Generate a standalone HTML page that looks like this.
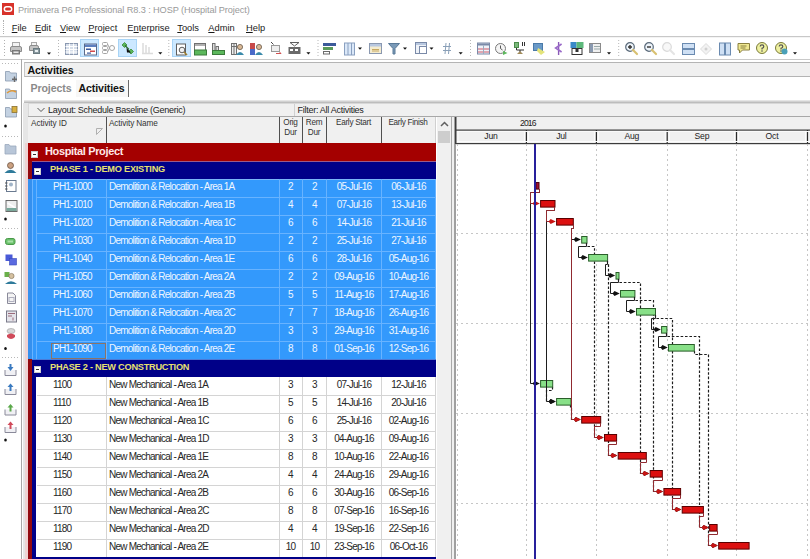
<!DOCTYPE html>
<html><head><meta charset="utf-8"><style>
html,body{margin:0;padding:0;width:810px;height:559px;overflow:hidden;background:#fff}
body{position:relative;font-family:"Liberation Sans", sans-serif}
.t{position:absolute;white-space:nowrap;line-height:1.15}
u{text-decoration:underline;text-underline-offset:1px}
</style></head><body>
<div style="position:absolute;left:0px;top:0px;width:810px;height:17px;background:#fff"></div><svg style="position:absolute;left:2px;top:3px" width="12" height="12" viewBox="0 0 13 13"><rect x="0" y="0" width="13" height="13" fill="#d8322a"/><rect x="2.5" y="4" width="8" height="5" rx="2.5" ry="2.5" fill="none" stroke="#fff" stroke-width="1.6"/></svg><div class="t" style="left:18px;top:4.5px;font-size:9.2px;color:#9a9a9a;font-weight:normal;letter-spacing:-0.1px;">Primavera P6 Professional R8.3 : HOSP (Hospital Project)</div><div style="position:absolute;left:0px;top:17px;width:810px;height:20px;background:#fff"></div><div style="position:absolute;left:3px;top:20px;width:1px;height:14px;border-left:1px dotted #b0b0b0"></div><div class="t" style="left:11.7px;top:23.3px;font-size:9.3px;color:#1a1a1a;font-weight:normal;letter-spacing:0px;"><u>F</u>ile</div><div class="t" style="left:35px;top:23.3px;font-size:9.3px;color:#1a1a1a;font-weight:normal;letter-spacing:0px;"><u>E</u>dit</div><div class="t" style="left:60px;top:23.3px;font-size:9.3px;color:#1a1a1a;font-weight:normal;letter-spacing:0px;"><u>V</u>iew</div><div class="t" style="left:88.3px;top:23.3px;font-size:9.3px;color:#1a1a1a;font-weight:normal;letter-spacing:0px;"><u>P</u>roject</div><div class="t" style="left:127.3px;top:23.3px;font-size:9.3px;color:#1a1a1a;font-weight:normal;letter-spacing:0px;">E<u>n</u>terprise</div><div class="t" style="left:177.3px;top:23.3px;font-size:9.3px;color:#1a1a1a;font-weight:normal;letter-spacing:0px;"><u>T</u>ools</div><div class="t" style="left:208.3px;top:23.3px;font-size:9.3px;color:#1a1a1a;font-weight:normal;letter-spacing:0px;"><u>A</u>dmin</div><div class="t" style="left:246px;top:23.3px;font-size:9.3px;color:#1a1a1a;font-weight:normal;letter-spacing:0px;"><u>H</u>elp</div><div style="position:absolute;left:0px;top:36px;width:810px;height:1px;background:#c8c8c8"></div><div style="position:absolute;left:0px;top:37px;width:810px;height:1px;background:#f4f4f4"></div><div style="position:absolute;left:0px;top:38px;width:810px;height:21px;background:#fff"></div><div style="position:absolute;left:0px;top:59px;width:810px;height:1px;background:#c9c9c9"></div><div style="position:absolute;left:0px;top:60px;width:810px;height:2px;background:#fff"></div><div style="position:absolute;left:0px;top:62px;width:21px;height:497px;background:#fff"></div><div style="position:absolute;left:21px;top:59px;width:1px;height:500px;background:#a8a8a8"></div><div style="position:absolute;left:22px;top:62px;width:2px;height:497px;background:#fff"></div><div style="position:absolute;left:24px;top:62px;width:786px;height:15px;background:#f0f0f0;border-top:1px solid #b4b4b4;border-left:1px solid #c8c8c8;border-bottom:1px solid #b4b4b4;box-sizing:border-box"></div><div class="t" style="left:27.5px;top:64px;font-size:10.6px;color:#111;font-weight:bold;letter-spacing:-0.1px;">Activities</div><div style="position:absolute;left:24px;top:77px;width:786px;height:23px;background:#fff"></div><div style="position:absolute;left:76px;top:80px;width:52px;height:17px;background:#f7f7f7"></div><div style="position:absolute;left:128px;top:80px;width:1px;height:17px;background:#6a6a6a"></div><div class="t" style="left:30.5px;top:82px;font-size:10.6px;color:#8a8a8a;font-weight:bold;letter-spacing:-0.1px;">Projects</div><div class="t" style="left:78.5px;top:82px;font-size:10.6px;color:#111;font-weight:bold;letter-spacing:-0.1px;">Activities</div><div style="position:absolute;left:24px;top:100px;width:786px;height:1px;background:#e6e6e6"></div><div style="position:absolute;left:24px;top:101px;width:786px;height:1px;background:#d2d2d2"></div><div style="position:absolute;left:24px;top:102px;width:786px;height:1px;background:#bdbdbd"></div><div style="position:absolute;left:28px;top:103px;width:782px;height:13px;background:#f0f0f0;border-top:1px solid #d8d8d8;border-left:1px solid #d8d8d8;box-sizing:border-box"></div><div style="position:absolute;left:28px;top:116px;width:782px;height:1px;background:#a8a8a8"></div><div style="position:absolute;left:294px;top:104px;width:1px;height:12px;background:#d0d0d0"></div><svg style="position:absolute;left:37px;top:107px" width="8" height="6" viewBox="0 0 8 6"><path d="M0.5 1 L4 4.5 L7.5 1" fill="none" stroke="#555" stroke-width="1"/></svg><div class="t" style="left:48px;top:104.5px;font-size:9px;color:#222;font-weight:normal;letter-spacing:-0.27px;">Layout: Schedule Baseline (Generic)</div><div class="t" style="left:297.5px;top:104.5px;font-size:9px;color:#222;font-weight:normal;letter-spacing:-0.27px;">Filter: All Activities</div><div style="position:absolute;left:28px;top:117px;width:408px;height:26px;background:#f0f0f0"></div><div style="position:absolute;left:106px;top:117px;width:1px;height:26px;background:#505050"></div><div style="position:absolute;left:279px;top:117px;width:1px;height:26px;background:#505050"></div><div style="position:absolute;left:302px;top:117px;width:1px;height:26px;background:#505050"></div><div style="position:absolute;left:326px;top:117px;width:1px;height:26px;background:#505050"></div><div style="position:absolute;left:381px;top:117px;width:1px;height:26px;background:#505050"></div><div style="position:absolute;left:435px;top:117px;width:1px;height:26px;background:#d0d0d0"></div><div class="t" style="left:31px;top:118.5px;font-size:8.2px;color:#333;font-weight:normal;letter-spacing:-0.05px;">Activity ID</div><div class="t" style="left:109px;top:118.5px;font-size:8.2px;color:#333;font-weight:normal;letter-spacing:-0.1px;">Activity Name</div><div class="t" style="left:275.5px;top:118px;width:30px;text-align:center;font-size:8.2px;color:#333;font-weight:normal;letter-spacing:-0.3px;">Orig</div><div class="t" style="left:275.5px;top:128px;width:30px;text-align:center;font-size:8.2px;color:#333;font-weight:normal;letter-spacing:-0.3px;">Dur</div><div class="t" style="left:299.0px;top:118px;width:30px;text-align:center;font-size:8.2px;color:#333;font-weight:normal;letter-spacing:-0.3px;">Rem</div><div class="t" style="left:299.0px;top:128px;width:30px;text-align:center;font-size:8.2px;color:#333;font-weight:normal;letter-spacing:-0.3px;">Dur</div><div class="t" style="left:323.5px;top:118px;width:60px;text-align:center;font-size:8.2px;color:#333;font-weight:normal;letter-spacing:-0.3px;">Early Start</div><div class="t" style="left:378.0px;top:118px;width:60px;text-align:center;font-size:8.2px;color:#333;font-weight:normal;letter-spacing:-0.3px;">Early Finish</div><svg style="position:absolute;left:96px;top:128px" width="7" height="7" viewBox="0 0 7 7"><path d="M0.5 0.5 L6.5 0.5 L0.5 6.5 Z" fill="none" stroke="#b0b0b0" stroke-width="1"/></svg><div style="position:absolute;left:28px;top:143px;width:408px;height:416px;background:#fff"></div><div style="position:absolute;left:28px;top:143px;width:408px;height:18px;background:#a40000"></div><div style="position:absolute;left:28px;top:161px;width:4px;height:398px;background:#920a10"></div><div style="position:absolute;left:23px;top:103px;width:5px;height:456px;background:#e6e6e6"></div><div style="position:absolute;left:25px;top:143px;width:3px;height:416px;background:#eed2d2"></div><div style="position:absolute;left:31px;top:151px;width:7px;height:7px;background:#fff;box-sizing:border-box;border:1px solid #ccc"></div><div style="position:absolute;left:33px;top:154px;width:3px;height:1px;background:#333"></div><div class="t" style="left:45px;top:145px;font-size:11px;color:#ffe8e8;font-weight:bold;letter-spacing:-0.36px;">Hospital Project</div><div style="position:absolute;left:32px;top:161px;width:404px;height:18px;background:#000088"></div><div style="position:absolute;left:32px;top:161px;width:404px;height:1px;background:#9a5a8a"></div><div style="position:absolute;left:34px;top:168px;width:7px;height:7px;background:#fff;box-sizing:border-box;border:1px solid #ccc"></div><div style="position:absolute;left:36px;top:171px;width:3px;height:1px;background:#333"></div><div class="t" style="left:50px;top:163.8px;font-size:9.2px;color:#e6e070;font-weight:bold;letter-spacing:-0.24px;">PHASE 1 - DEMO EXISTING</div><div style="position:absolute;left:28px;top:179px;width:408px;height:180px;background:#3399fc"></div><div style="position:absolute;left:32px;top:179px;width:1px;height:180px;background:#68b3ff"></div><div style="position:absolute;left:36px;top:179px;width:1px;height:180px;background:#68b3ff"></div><div style="position:absolute;left:28px;top:179px;width:4px;height:180px;background:#3590ee"></div><div style="position:absolute;left:32px;top:179px;width:404px;height:1px;background:#7ab8f8"></div><div style="position:absolute;left:37px;top:197px;width:399px;height:1px;background:#68b3ff"></div><div style="position:absolute;left:106px;top:179px;width:1px;height:18px;background:#68b3ff"></div><div style="position:absolute;left:279px;top:179px;width:1px;height:18px;background:#68b3ff"></div><div style="position:absolute;left:302px;top:179px;width:1px;height:18px;background:#68b3ff"></div><div style="position:absolute;left:326px;top:179px;width:1px;height:18px;background:#68b3ff"></div><div style="position:absolute;left:381px;top:179px;width:1px;height:18px;background:#68b3ff"></div><div style="position:absolute;left:435px;top:179px;width:1px;height:18px;background:#68b3ff"></div><div class="t" style="left:53px;top:181.1px;font-size:10px;color:#eef6ff;font-weight:normal;letter-spacing:-0.78px;">PH1-1000</div><div class="t" style="left:109px;top:181.1px;font-size:10px;color:#eef6ff;font-weight:normal;letter-spacing:-0.78px;">Demolition &amp; Relocation - Area 1A</div><div class="t" style="left:279.5px;top:181.1px;width:22px;text-align:center;font-size:10px;color:#eef6ff;font-weight:normal;letter-spacing:-0.78px;">2</div><div class="t" style="left:303.5px;top:181.1px;width:22px;text-align:center;font-size:10px;color:#eef6ff;font-weight:normal;letter-spacing:-0.78px;">2</div><div class="t" style="left:327.0px;top:181.1px;width:54px;text-align:center;font-size:10px;color:#eef6ff;font-weight:normal;letter-spacing:-0.78px;">05-Jul-16</div><div class="t" style="left:381.5px;top:181.1px;width:54px;text-align:center;font-size:10px;color:#eef6ff;font-weight:normal;letter-spacing:-0.78px;">06-Jul-16</div><div style="position:absolute;left:37px;top:215px;width:399px;height:1px;background:#68b3ff"></div><div style="position:absolute;left:106px;top:197px;width:1px;height:18px;background:#68b3ff"></div><div style="position:absolute;left:279px;top:197px;width:1px;height:18px;background:#68b3ff"></div><div style="position:absolute;left:302px;top:197px;width:1px;height:18px;background:#68b3ff"></div><div style="position:absolute;left:326px;top:197px;width:1px;height:18px;background:#68b3ff"></div><div style="position:absolute;left:381px;top:197px;width:1px;height:18px;background:#68b3ff"></div><div style="position:absolute;left:435px;top:197px;width:1px;height:18px;background:#68b3ff"></div><div class="t" style="left:53px;top:199.1px;font-size:10px;color:#eef6ff;font-weight:normal;letter-spacing:-0.78px;">PH1-1010</div><div class="t" style="left:109px;top:199.1px;font-size:10px;color:#eef6ff;font-weight:normal;letter-spacing:-0.78px;">Demolition &amp; Relocation - Area 1B</div><div class="t" style="left:279.5px;top:199.1px;width:22px;text-align:center;font-size:10px;color:#eef6ff;font-weight:normal;letter-spacing:-0.78px;">4</div><div class="t" style="left:303.5px;top:199.1px;width:22px;text-align:center;font-size:10px;color:#eef6ff;font-weight:normal;letter-spacing:-0.78px;">4</div><div class="t" style="left:327.0px;top:199.1px;width:54px;text-align:center;font-size:10px;color:#eef6ff;font-weight:normal;letter-spacing:-0.78px;">07-Jul-16</div><div class="t" style="left:381.5px;top:199.1px;width:54px;text-align:center;font-size:10px;color:#eef6ff;font-weight:normal;letter-spacing:-0.78px;">13-Jul-16</div><div style="position:absolute;left:37px;top:233px;width:399px;height:1px;background:#68b3ff"></div><div style="position:absolute;left:106px;top:215px;width:1px;height:18px;background:#68b3ff"></div><div style="position:absolute;left:279px;top:215px;width:1px;height:18px;background:#68b3ff"></div><div style="position:absolute;left:302px;top:215px;width:1px;height:18px;background:#68b3ff"></div><div style="position:absolute;left:326px;top:215px;width:1px;height:18px;background:#68b3ff"></div><div style="position:absolute;left:381px;top:215px;width:1px;height:18px;background:#68b3ff"></div><div style="position:absolute;left:435px;top:215px;width:1px;height:18px;background:#68b3ff"></div><div class="t" style="left:53px;top:217.1px;font-size:10px;color:#eef6ff;font-weight:normal;letter-spacing:-0.78px;">PH1-1020</div><div class="t" style="left:109px;top:217.1px;font-size:10px;color:#eef6ff;font-weight:normal;letter-spacing:-0.78px;">Demolition &amp; Relocation - Area 1C</div><div class="t" style="left:279.5px;top:217.1px;width:22px;text-align:center;font-size:10px;color:#eef6ff;font-weight:normal;letter-spacing:-0.78px;">6</div><div class="t" style="left:303.5px;top:217.1px;width:22px;text-align:center;font-size:10px;color:#eef6ff;font-weight:normal;letter-spacing:-0.78px;">6</div><div class="t" style="left:327.0px;top:217.1px;width:54px;text-align:center;font-size:10px;color:#eef6ff;font-weight:normal;letter-spacing:-0.78px;">14-Jul-16</div><div class="t" style="left:381.5px;top:217.1px;width:54px;text-align:center;font-size:10px;color:#eef6ff;font-weight:normal;letter-spacing:-0.78px;">21-Jul-16</div><div style="position:absolute;left:37px;top:251px;width:399px;height:1px;background:#68b3ff"></div><div style="position:absolute;left:106px;top:233px;width:1px;height:18px;background:#68b3ff"></div><div style="position:absolute;left:279px;top:233px;width:1px;height:18px;background:#68b3ff"></div><div style="position:absolute;left:302px;top:233px;width:1px;height:18px;background:#68b3ff"></div><div style="position:absolute;left:326px;top:233px;width:1px;height:18px;background:#68b3ff"></div><div style="position:absolute;left:381px;top:233px;width:1px;height:18px;background:#68b3ff"></div><div style="position:absolute;left:435px;top:233px;width:1px;height:18px;background:#68b3ff"></div><div class="t" style="left:53px;top:235.1px;font-size:10px;color:#eef6ff;font-weight:normal;letter-spacing:-0.78px;">PH1-1030</div><div class="t" style="left:109px;top:235.1px;font-size:10px;color:#eef6ff;font-weight:normal;letter-spacing:-0.78px;">Demolition &amp; Relocation - Area 1D</div><div class="t" style="left:279.5px;top:235.1px;width:22px;text-align:center;font-size:10px;color:#eef6ff;font-weight:normal;letter-spacing:-0.78px;">2</div><div class="t" style="left:303.5px;top:235.1px;width:22px;text-align:center;font-size:10px;color:#eef6ff;font-weight:normal;letter-spacing:-0.78px;">2</div><div class="t" style="left:327.0px;top:235.1px;width:54px;text-align:center;font-size:10px;color:#eef6ff;font-weight:normal;letter-spacing:-0.78px;">25-Jul-16</div><div class="t" style="left:381.5px;top:235.1px;width:54px;text-align:center;font-size:10px;color:#eef6ff;font-weight:normal;letter-spacing:-0.78px;">27-Jul-16</div><div style="position:absolute;left:37px;top:269px;width:399px;height:1px;background:#68b3ff"></div><div style="position:absolute;left:106px;top:251px;width:1px;height:18px;background:#68b3ff"></div><div style="position:absolute;left:279px;top:251px;width:1px;height:18px;background:#68b3ff"></div><div style="position:absolute;left:302px;top:251px;width:1px;height:18px;background:#68b3ff"></div><div style="position:absolute;left:326px;top:251px;width:1px;height:18px;background:#68b3ff"></div><div style="position:absolute;left:381px;top:251px;width:1px;height:18px;background:#68b3ff"></div><div style="position:absolute;left:435px;top:251px;width:1px;height:18px;background:#68b3ff"></div><div class="t" style="left:53px;top:253.1px;font-size:10px;color:#eef6ff;font-weight:normal;letter-spacing:-0.78px;">PH1-1040</div><div class="t" style="left:109px;top:253.1px;font-size:10px;color:#eef6ff;font-weight:normal;letter-spacing:-0.78px;">Demolition &amp; Relocation - Area 1E</div><div class="t" style="left:279.5px;top:253.1px;width:22px;text-align:center;font-size:10px;color:#eef6ff;font-weight:normal;letter-spacing:-0.78px;">6</div><div class="t" style="left:303.5px;top:253.1px;width:22px;text-align:center;font-size:10px;color:#eef6ff;font-weight:normal;letter-spacing:-0.78px;">6</div><div class="t" style="left:327.0px;top:253.1px;width:54px;text-align:center;font-size:10px;color:#eef6ff;font-weight:normal;letter-spacing:-0.78px;">28-Jul-16</div><div class="t" style="left:381.5px;top:253.1px;width:54px;text-align:center;font-size:10px;color:#eef6ff;font-weight:normal;letter-spacing:-0.78px;">05-Aug-16</div><div style="position:absolute;left:37px;top:287px;width:399px;height:1px;background:#68b3ff"></div><div style="position:absolute;left:106px;top:269px;width:1px;height:18px;background:#68b3ff"></div><div style="position:absolute;left:279px;top:269px;width:1px;height:18px;background:#68b3ff"></div><div style="position:absolute;left:302px;top:269px;width:1px;height:18px;background:#68b3ff"></div><div style="position:absolute;left:326px;top:269px;width:1px;height:18px;background:#68b3ff"></div><div style="position:absolute;left:381px;top:269px;width:1px;height:18px;background:#68b3ff"></div><div style="position:absolute;left:435px;top:269px;width:1px;height:18px;background:#68b3ff"></div><div class="t" style="left:53px;top:271.1px;font-size:10px;color:#eef6ff;font-weight:normal;letter-spacing:-0.78px;">PH1-1050</div><div class="t" style="left:109px;top:271.1px;font-size:10px;color:#eef6ff;font-weight:normal;letter-spacing:-0.78px;">Demolition &amp; Relocation - Area 2A</div><div class="t" style="left:279.5px;top:271.1px;width:22px;text-align:center;font-size:10px;color:#eef6ff;font-weight:normal;letter-spacing:-0.78px;">2</div><div class="t" style="left:303.5px;top:271.1px;width:22px;text-align:center;font-size:10px;color:#eef6ff;font-weight:normal;letter-spacing:-0.78px;">2</div><div class="t" style="left:327.0px;top:271.1px;width:54px;text-align:center;font-size:10px;color:#eef6ff;font-weight:normal;letter-spacing:-0.78px;">09-Aug-16</div><div class="t" style="left:381.5px;top:271.1px;width:54px;text-align:center;font-size:10px;color:#eef6ff;font-weight:normal;letter-spacing:-0.78px;">10-Aug-16</div><div style="position:absolute;left:37px;top:305px;width:399px;height:1px;background:#68b3ff"></div><div style="position:absolute;left:106px;top:287px;width:1px;height:18px;background:#68b3ff"></div><div style="position:absolute;left:279px;top:287px;width:1px;height:18px;background:#68b3ff"></div><div style="position:absolute;left:302px;top:287px;width:1px;height:18px;background:#68b3ff"></div><div style="position:absolute;left:326px;top:287px;width:1px;height:18px;background:#68b3ff"></div><div style="position:absolute;left:381px;top:287px;width:1px;height:18px;background:#68b3ff"></div><div style="position:absolute;left:435px;top:287px;width:1px;height:18px;background:#68b3ff"></div><div class="t" style="left:53px;top:289.1px;font-size:10px;color:#eef6ff;font-weight:normal;letter-spacing:-0.78px;">PH1-1060</div><div class="t" style="left:109px;top:289.1px;font-size:10px;color:#eef6ff;font-weight:normal;letter-spacing:-0.78px;">Demolition &amp; Relocation - Area 2B</div><div class="t" style="left:279.5px;top:289.1px;width:22px;text-align:center;font-size:10px;color:#eef6ff;font-weight:normal;letter-spacing:-0.78px;">5</div><div class="t" style="left:303.5px;top:289.1px;width:22px;text-align:center;font-size:10px;color:#eef6ff;font-weight:normal;letter-spacing:-0.78px;">5</div><div class="t" style="left:327.0px;top:289.1px;width:54px;text-align:center;font-size:10px;color:#eef6ff;font-weight:normal;letter-spacing:-0.78px;">11-Aug-16</div><div class="t" style="left:381.5px;top:289.1px;width:54px;text-align:center;font-size:10px;color:#eef6ff;font-weight:normal;letter-spacing:-0.78px;">17-Aug-16</div><div style="position:absolute;left:37px;top:323px;width:399px;height:1px;background:#68b3ff"></div><div style="position:absolute;left:106px;top:305px;width:1px;height:18px;background:#68b3ff"></div><div style="position:absolute;left:279px;top:305px;width:1px;height:18px;background:#68b3ff"></div><div style="position:absolute;left:302px;top:305px;width:1px;height:18px;background:#68b3ff"></div><div style="position:absolute;left:326px;top:305px;width:1px;height:18px;background:#68b3ff"></div><div style="position:absolute;left:381px;top:305px;width:1px;height:18px;background:#68b3ff"></div><div style="position:absolute;left:435px;top:305px;width:1px;height:18px;background:#68b3ff"></div><div class="t" style="left:53px;top:307.1px;font-size:10px;color:#eef6ff;font-weight:normal;letter-spacing:-0.78px;">PH1-1070</div><div class="t" style="left:109px;top:307.1px;font-size:10px;color:#eef6ff;font-weight:normal;letter-spacing:-0.78px;">Demolition &amp; Relocation - Area 2C</div><div class="t" style="left:279.5px;top:307.1px;width:22px;text-align:center;font-size:10px;color:#eef6ff;font-weight:normal;letter-spacing:-0.78px;">7</div><div class="t" style="left:303.5px;top:307.1px;width:22px;text-align:center;font-size:10px;color:#eef6ff;font-weight:normal;letter-spacing:-0.78px;">7</div><div class="t" style="left:327.0px;top:307.1px;width:54px;text-align:center;font-size:10px;color:#eef6ff;font-weight:normal;letter-spacing:-0.78px;">18-Aug-16</div><div class="t" style="left:381.5px;top:307.1px;width:54px;text-align:center;font-size:10px;color:#eef6ff;font-weight:normal;letter-spacing:-0.78px;">26-Aug-16</div><div style="position:absolute;left:37px;top:341px;width:399px;height:1px;background:#68b3ff"></div><div style="position:absolute;left:106px;top:323px;width:1px;height:18px;background:#68b3ff"></div><div style="position:absolute;left:279px;top:323px;width:1px;height:18px;background:#68b3ff"></div><div style="position:absolute;left:302px;top:323px;width:1px;height:18px;background:#68b3ff"></div><div style="position:absolute;left:326px;top:323px;width:1px;height:18px;background:#68b3ff"></div><div style="position:absolute;left:381px;top:323px;width:1px;height:18px;background:#68b3ff"></div><div style="position:absolute;left:435px;top:323px;width:1px;height:18px;background:#68b3ff"></div><div class="t" style="left:53px;top:325.1px;font-size:10px;color:#eef6ff;font-weight:normal;letter-spacing:-0.78px;">PH1-1080</div><div class="t" style="left:109px;top:325.1px;font-size:10px;color:#eef6ff;font-weight:normal;letter-spacing:-0.78px;">Demolition &amp; Relocation - Area 2D</div><div class="t" style="left:279.5px;top:325.1px;width:22px;text-align:center;font-size:10px;color:#eef6ff;font-weight:normal;letter-spacing:-0.78px;">3</div><div class="t" style="left:303.5px;top:325.1px;width:22px;text-align:center;font-size:10px;color:#eef6ff;font-weight:normal;letter-spacing:-0.78px;">3</div><div class="t" style="left:327.0px;top:325.1px;width:54px;text-align:center;font-size:10px;color:#eef6ff;font-weight:normal;letter-spacing:-0.78px;">29-Aug-16</div><div class="t" style="left:381.5px;top:325.1px;width:54px;text-align:center;font-size:10px;color:#eef6ff;font-weight:normal;letter-spacing:-0.78px;">31-Aug-16</div><div style="position:absolute;left:37px;top:359px;width:399px;height:1px;background:#68b3ff"></div><div style="position:absolute;left:106px;top:341px;width:1px;height:18px;background:#68b3ff"></div><div style="position:absolute;left:279px;top:341px;width:1px;height:18px;background:#68b3ff"></div><div style="position:absolute;left:302px;top:341px;width:1px;height:18px;background:#68b3ff"></div><div style="position:absolute;left:326px;top:341px;width:1px;height:18px;background:#68b3ff"></div><div style="position:absolute;left:381px;top:341px;width:1px;height:18px;background:#68b3ff"></div><div style="position:absolute;left:435px;top:341px;width:1px;height:18px;background:#68b3ff"></div><div class="t" style="left:53px;top:343.1px;font-size:10px;color:#eef6ff;font-weight:normal;letter-spacing:-0.78px;">PH1-1090</div><div class="t" style="left:109px;top:343.1px;font-size:10px;color:#eef6ff;font-weight:normal;letter-spacing:-0.78px;">Demolition &amp; Relocation - Area 2E</div><div class="t" style="left:279.5px;top:343.1px;width:22px;text-align:center;font-size:10px;color:#eef6ff;font-weight:normal;letter-spacing:-0.78px;">8</div><div class="t" style="left:303.5px;top:343.1px;width:22px;text-align:center;font-size:10px;color:#eef6ff;font-weight:normal;letter-spacing:-0.78px;">8</div><div class="t" style="left:327.0px;top:343.1px;width:54px;text-align:center;font-size:10px;color:#eef6ff;font-weight:normal;letter-spacing:-0.78px;">01-Sep-16</div><div class="t" style="left:381.5px;top:343.1px;width:54px;text-align:center;font-size:10px;color:#eef6ff;font-weight:normal;letter-spacing:-0.78px;">12-Sep-16</div><div style="position:absolute;left:50.5px;top:342.5px;width:55.5px;height:16.5px;border:1.5px solid #8a7468;box-sizing:border-box"></div><div style="position:absolute;left:32px;top:359px;width:404px;height:18px;background:#000088"></div><div style="position:absolute;left:32px;top:359px;width:404px;height:1px;background:#4a7ad8"></div><div style="position:absolute;left:34px;top:366px;width:7px;height:7px;background:#fff;box-sizing:border-box;border:1px solid #ccc"></div><div style="position:absolute;left:36px;top:369px;width:3px;height:1px;background:#333"></div><div class="t" style="left:50px;top:361.8px;font-size:9.2px;color:#e6e070;font-weight:bold;letter-spacing:-0.24px;">PHASE 2 - NEW CONSTRUCTION</div><div style="position:absolute;left:32px;top:377px;width:4px;height:182px;background:#000088"></div><div style="position:absolute;left:37px;top:395px;width:399px;height:1px;background:#d4d4d4"></div><div style="position:absolute;left:106px;top:377px;width:1px;height:18px;background:#d4d4d4"></div><div style="position:absolute;left:279px;top:377px;width:1px;height:18px;background:#d4d4d4"></div><div style="position:absolute;left:302px;top:377px;width:1px;height:18px;background:#d4d4d4"></div><div style="position:absolute;left:326px;top:377px;width:1px;height:18px;background:#d4d4d4"></div><div style="position:absolute;left:381px;top:377px;width:1px;height:18px;background:#d4d4d4"></div><div style="position:absolute;left:435px;top:377px;width:1px;height:18px;background:#d4d4d4"></div><div class="t" style="left:53px;top:379.1px;font-size:10px;color:#262626;font-weight:normal;letter-spacing:-0.78px;">1100</div><div class="t" style="left:109px;top:379.1px;font-size:10px;color:#262626;font-weight:normal;letter-spacing:-0.78px;">New Mechanical - Area 1A</div><div class="t" style="left:279.5px;top:379.1px;width:22px;text-align:center;font-size:10px;color:#262626;font-weight:normal;letter-spacing:-0.78px;">3</div><div class="t" style="left:303.5px;top:379.1px;width:22px;text-align:center;font-size:10px;color:#262626;font-weight:normal;letter-spacing:-0.78px;">3</div><div class="t" style="left:327.0px;top:379.1px;width:54px;text-align:center;font-size:10px;color:#262626;font-weight:normal;letter-spacing:-0.78px;">07-Jul-16</div><div class="t" style="left:381.5px;top:379.1px;width:54px;text-align:center;font-size:10px;color:#262626;font-weight:normal;letter-spacing:-0.78px;">12-Jul-16</div><div style="position:absolute;left:37px;top:413px;width:399px;height:1px;background:#d4d4d4"></div><div style="position:absolute;left:106px;top:395px;width:1px;height:18px;background:#d4d4d4"></div><div style="position:absolute;left:279px;top:395px;width:1px;height:18px;background:#d4d4d4"></div><div style="position:absolute;left:302px;top:395px;width:1px;height:18px;background:#d4d4d4"></div><div style="position:absolute;left:326px;top:395px;width:1px;height:18px;background:#d4d4d4"></div><div style="position:absolute;left:381px;top:395px;width:1px;height:18px;background:#d4d4d4"></div><div style="position:absolute;left:435px;top:395px;width:1px;height:18px;background:#d4d4d4"></div><div class="t" style="left:53px;top:397.1px;font-size:10px;color:#262626;font-weight:normal;letter-spacing:-0.78px;">1110</div><div class="t" style="left:109px;top:397.1px;font-size:10px;color:#262626;font-weight:normal;letter-spacing:-0.78px;">New Mechanical - Area 1B</div><div class="t" style="left:279.5px;top:397.1px;width:22px;text-align:center;font-size:10px;color:#262626;font-weight:normal;letter-spacing:-0.78px;">5</div><div class="t" style="left:303.5px;top:397.1px;width:22px;text-align:center;font-size:10px;color:#262626;font-weight:normal;letter-spacing:-0.78px;">5</div><div class="t" style="left:327.0px;top:397.1px;width:54px;text-align:center;font-size:10px;color:#262626;font-weight:normal;letter-spacing:-0.78px;">14-Jul-16</div><div class="t" style="left:381.5px;top:397.1px;width:54px;text-align:center;font-size:10px;color:#262626;font-weight:normal;letter-spacing:-0.78px;">20-Jul-16</div><div style="position:absolute;left:37px;top:431px;width:399px;height:1px;background:#d4d4d4"></div><div style="position:absolute;left:106px;top:413px;width:1px;height:18px;background:#d4d4d4"></div><div style="position:absolute;left:279px;top:413px;width:1px;height:18px;background:#d4d4d4"></div><div style="position:absolute;left:302px;top:413px;width:1px;height:18px;background:#d4d4d4"></div><div style="position:absolute;left:326px;top:413px;width:1px;height:18px;background:#d4d4d4"></div><div style="position:absolute;left:381px;top:413px;width:1px;height:18px;background:#d4d4d4"></div><div style="position:absolute;left:435px;top:413px;width:1px;height:18px;background:#d4d4d4"></div><div class="t" style="left:53px;top:415.1px;font-size:10px;color:#262626;font-weight:normal;letter-spacing:-0.78px;">1120</div><div class="t" style="left:109px;top:415.1px;font-size:10px;color:#262626;font-weight:normal;letter-spacing:-0.78px;">New Mechanical - Area 1C</div><div class="t" style="left:279.5px;top:415.1px;width:22px;text-align:center;font-size:10px;color:#262626;font-weight:normal;letter-spacing:-0.78px;">6</div><div class="t" style="left:303.5px;top:415.1px;width:22px;text-align:center;font-size:10px;color:#262626;font-weight:normal;letter-spacing:-0.78px;">6</div><div class="t" style="left:327.0px;top:415.1px;width:54px;text-align:center;font-size:10px;color:#262626;font-weight:normal;letter-spacing:-0.78px;">25-Jul-16</div><div class="t" style="left:381.5px;top:415.1px;width:54px;text-align:center;font-size:10px;color:#262626;font-weight:normal;letter-spacing:-0.78px;">02-Aug-16</div><div style="position:absolute;left:37px;top:449px;width:399px;height:1px;background:#d4d4d4"></div><div style="position:absolute;left:106px;top:431px;width:1px;height:18px;background:#d4d4d4"></div><div style="position:absolute;left:279px;top:431px;width:1px;height:18px;background:#d4d4d4"></div><div style="position:absolute;left:302px;top:431px;width:1px;height:18px;background:#d4d4d4"></div><div style="position:absolute;left:326px;top:431px;width:1px;height:18px;background:#d4d4d4"></div><div style="position:absolute;left:381px;top:431px;width:1px;height:18px;background:#d4d4d4"></div><div style="position:absolute;left:435px;top:431px;width:1px;height:18px;background:#d4d4d4"></div><div class="t" style="left:53px;top:433.1px;font-size:10px;color:#262626;font-weight:normal;letter-spacing:-0.78px;">1130</div><div class="t" style="left:109px;top:433.1px;font-size:10px;color:#262626;font-weight:normal;letter-spacing:-0.78px;">New Mechanical - Area 1D</div><div class="t" style="left:279.5px;top:433.1px;width:22px;text-align:center;font-size:10px;color:#262626;font-weight:normal;letter-spacing:-0.78px;">3</div><div class="t" style="left:303.5px;top:433.1px;width:22px;text-align:center;font-size:10px;color:#262626;font-weight:normal;letter-spacing:-0.78px;">3</div><div class="t" style="left:327.0px;top:433.1px;width:54px;text-align:center;font-size:10px;color:#262626;font-weight:normal;letter-spacing:-0.78px;">04-Aug-16</div><div class="t" style="left:381.5px;top:433.1px;width:54px;text-align:center;font-size:10px;color:#262626;font-weight:normal;letter-spacing:-0.78px;">09-Aug-16</div><div style="position:absolute;left:37px;top:467px;width:399px;height:1px;background:#d4d4d4"></div><div style="position:absolute;left:106px;top:449px;width:1px;height:18px;background:#d4d4d4"></div><div style="position:absolute;left:279px;top:449px;width:1px;height:18px;background:#d4d4d4"></div><div style="position:absolute;left:302px;top:449px;width:1px;height:18px;background:#d4d4d4"></div><div style="position:absolute;left:326px;top:449px;width:1px;height:18px;background:#d4d4d4"></div><div style="position:absolute;left:381px;top:449px;width:1px;height:18px;background:#d4d4d4"></div><div style="position:absolute;left:435px;top:449px;width:1px;height:18px;background:#d4d4d4"></div><div class="t" style="left:53px;top:451.1px;font-size:10px;color:#262626;font-weight:normal;letter-spacing:-0.78px;">1140</div><div class="t" style="left:109px;top:451.1px;font-size:10px;color:#262626;font-weight:normal;letter-spacing:-0.78px;">New Mechanical - Area 1E</div><div class="t" style="left:279.5px;top:451.1px;width:22px;text-align:center;font-size:10px;color:#262626;font-weight:normal;letter-spacing:-0.78px;">8</div><div class="t" style="left:303.5px;top:451.1px;width:22px;text-align:center;font-size:10px;color:#262626;font-weight:normal;letter-spacing:-0.78px;">8</div><div class="t" style="left:327.0px;top:451.1px;width:54px;text-align:center;font-size:10px;color:#262626;font-weight:normal;letter-spacing:-0.78px;">10-Aug-16</div><div class="t" style="left:381.5px;top:451.1px;width:54px;text-align:center;font-size:10px;color:#262626;font-weight:normal;letter-spacing:-0.78px;">22-Aug-16</div><div style="position:absolute;left:37px;top:485px;width:399px;height:1px;background:#d4d4d4"></div><div style="position:absolute;left:106px;top:467px;width:1px;height:18px;background:#d4d4d4"></div><div style="position:absolute;left:279px;top:467px;width:1px;height:18px;background:#d4d4d4"></div><div style="position:absolute;left:302px;top:467px;width:1px;height:18px;background:#d4d4d4"></div><div style="position:absolute;left:326px;top:467px;width:1px;height:18px;background:#d4d4d4"></div><div style="position:absolute;left:381px;top:467px;width:1px;height:18px;background:#d4d4d4"></div><div style="position:absolute;left:435px;top:467px;width:1px;height:18px;background:#d4d4d4"></div><div class="t" style="left:53px;top:469.1px;font-size:10px;color:#262626;font-weight:normal;letter-spacing:-0.78px;">1150</div><div class="t" style="left:109px;top:469.1px;font-size:10px;color:#262626;font-weight:normal;letter-spacing:-0.78px;">New Mechanical - Area 2A</div><div class="t" style="left:279.5px;top:469.1px;width:22px;text-align:center;font-size:10px;color:#262626;font-weight:normal;letter-spacing:-0.78px;">4</div><div class="t" style="left:303.5px;top:469.1px;width:22px;text-align:center;font-size:10px;color:#262626;font-weight:normal;letter-spacing:-0.78px;">4</div><div class="t" style="left:327.0px;top:469.1px;width:54px;text-align:center;font-size:10px;color:#262626;font-weight:normal;letter-spacing:-0.78px;">24-Aug-16</div><div class="t" style="left:381.5px;top:469.1px;width:54px;text-align:center;font-size:10px;color:#262626;font-weight:normal;letter-spacing:-0.78px;">29-Aug-16</div><div style="position:absolute;left:37px;top:503px;width:399px;height:1px;background:#d4d4d4"></div><div style="position:absolute;left:106px;top:485px;width:1px;height:18px;background:#d4d4d4"></div><div style="position:absolute;left:279px;top:485px;width:1px;height:18px;background:#d4d4d4"></div><div style="position:absolute;left:302px;top:485px;width:1px;height:18px;background:#d4d4d4"></div><div style="position:absolute;left:326px;top:485px;width:1px;height:18px;background:#d4d4d4"></div><div style="position:absolute;left:381px;top:485px;width:1px;height:18px;background:#d4d4d4"></div><div style="position:absolute;left:435px;top:485px;width:1px;height:18px;background:#d4d4d4"></div><div class="t" style="left:53px;top:487.1px;font-size:10px;color:#262626;font-weight:normal;letter-spacing:-0.78px;">1160</div><div class="t" style="left:109px;top:487.1px;font-size:10px;color:#262626;font-weight:normal;letter-spacing:-0.78px;">New Mechanical - Area 2B</div><div class="t" style="left:279.5px;top:487.1px;width:22px;text-align:center;font-size:10px;color:#262626;font-weight:normal;letter-spacing:-0.78px;">6</div><div class="t" style="left:303.5px;top:487.1px;width:22px;text-align:center;font-size:10px;color:#262626;font-weight:normal;letter-spacing:-0.78px;">6</div><div class="t" style="left:327.0px;top:487.1px;width:54px;text-align:center;font-size:10px;color:#262626;font-weight:normal;letter-spacing:-0.78px;">30-Aug-16</div><div class="t" style="left:381.5px;top:487.1px;width:54px;text-align:center;font-size:10px;color:#262626;font-weight:normal;letter-spacing:-0.78px;">06-Sep-16</div><div style="position:absolute;left:37px;top:521px;width:399px;height:1px;background:#d4d4d4"></div><div style="position:absolute;left:106px;top:503px;width:1px;height:18px;background:#d4d4d4"></div><div style="position:absolute;left:279px;top:503px;width:1px;height:18px;background:#d4d4d4"></div><div style="position:absolute;left:302px;top:503px;width:1px;height:18px;background:#d4d4d4"></div><div style="position:absolute;left:326px;top:503px;width:1px;height:18px;background:#d4d4d4"></div><div style="position:absolute;left:381px;top:503px;width:1px;height:18px;background:#d4d4d4"></div><div style="position:absolute;left:435px;top:503px;width:1px;height:18px;background:#d4d4d4"></div><div class="t" style="left:53px;top:505.1px;font-size:10px;color:#262626;font-weight:normal;letter-spacing:-0.78px;">1170</div><div class="t" style="left:109px;top:505.1px;font-size:10px;color:#262626;font-weight:normal;letter-spacing:-0.78px;">New Mechanical - Area 2C</div><div class="t" style="left:279.5px;top:505.1px;width:22px;text-align:center;font-size:10px;color:#262626;font-weight:normal;letter-spacing:-0.78px;">8</div><div class="t" style="left:303.5px;top:505.1px;width:22px;text-align:center;font-size:10px;color:#262626;font-weight:normal;letter-spacing:-0.78px;">8</div><div class="t" style="left:327.0px;top:505.1px;width:54px;text-align:center;font-size:10px;color:#262626;font-weight:normal;letter-spacing:-0.78px;">07-Sep-16</div><div class="t" style="left:381.5px;top:505.1px;width:54px;text-align:center;font-size:10px;color:#262626;font-weight:normal;letter-spacing:-0.78px;">16-Sep-16</div><div style="position:absolute;left:37px;top:539px;width:399px;height:1px;background:#d4d4d4"></div><div style="position:absolute;left:106px;top:521px;width:1px;height:18px;background:#d4d4d4"></div><div style="position:absolute;left:279px;top:521px;width:1px;height:18px;background:#d4d4d4"></div><div style="position:absolute;left:302px;top:521px;width:1px;height:18px;background:#d4d4d4"></div><div style="position:absolute;left:326px;top:521px;width:1px;height:18px;background:#d4d4d4"></div><div style="position:absolute;left:381px;top:521px;width:1px;height:18px;background:#d4d4d4"></div><div style="position:absolute;left:435px;top:521px;width:1px;height:18px;background:#d4d4d4"></div><div class="t" style="left:53px;top:523.1px;font-size:10px;color:#262626;font-weight:normal;letter-spacing:-0.78px;">1180</div><div class="t" style="left:109px;top:523.1px;font-size:10px;color:#262626;font-weight:normal;letter-spacing:-0.78px;">New Mechanical - Area 2D</div><div class="t" style="left:279.5px;top:523.1px;width:22px;text-align:center;font-size:10px;color:#262626;font-weight:normal;letter-spacing:-0.78px;">4</div><div class="t" style="left:303.5px;top:523.1px;width:22px;text-align:center;font-size:10px;color:#262626;font-weight:normal;letter-spacing:-0.78px;">4</div><div class="t" style="left:327.0px;top:523.1px;width:54px;text-align:center;font-size:10px;color:#262626;font-weight:normal;letter-spacing:-0.78px;">19-Sep-16</div><div class="t" style="left:381.5px;top:523.1px;width:54px;text-align:center;font-size:10px;color:#262626;font-weight:normal;letter-spacing:-0.78px;">22-Sep-16</div><div style="position:absolute;left:37px;top:557px;width:399px;height:1px;background:#d4d4d4"></div><div style="position:absolute;left:106px;top:539px;width:1px;height:18px;background:#d4d4d4"></div><div style="position:absolute;left:279px;top:539px;width:1px;height:18px;background:#d4d4d4"></div><div style="position:absolute;left:302px;top:539px;width:1px;height:18px;background:#d4d4d4"></div><div style="position:absolute;left:326px;top:539px;width:1px;height:18px;background:#d4d4d4"></div><div style="position:absolute;left:381px;top:539px;width:1px;height:18px;background:#d4d4d4"></div><div style="position:absolute;left:435px;top:539px;width:1px;height:18px;background:#d4d4d4"></div><div class="t" style="left:53px;top:541.1px;font-size:10px;color:#262626;font-weight:normal;letter-spacing:-0.78px;">1190</div><div class="t" style="left:109px;top:541.1px;font-size:10px;color:#262626;font-weight:normal;letter-spacing:-0.78px;">New Mechanical - Area 2E</div><div class="t" style="left:279.5px;top:541.1px;width:22px;text-align:center;font-size:10px;color:#262626;font-weight:normal;letter-spacing:-0.78px;">10</div><div class="t" style="left:303.5px;top:541.1px;width:22px;text-align:center;font-size:10px;color:#262626;font-weight:normal;letter-spacing:-0.78px;">10</div><div class="t" style="left:327.0px;top:541.1px;width:54px;text-align:center;font-size:10px;color:#262626;font-weight:normal;letter-spacing:-0.78px;">23-Sep-16</div><div class="t" style="left:381.5px;top:541.1px;width:54px;text-align:center;font-size:10px;color:#262626;font-weight:normal;letter-spacing:-0.78px;">06-Oct-16</div><div style="position:absolute;left:32px;top:557px;width:404px;height:2px;background:#000088"></div><div style="position:absolute;left:436px;top:117px;width:16px;height:442px;background:#f0f0f0"></div><div style="position:absolute;left:436px;top:117px;width:1px;height:442px;background:#fff"></div><svg style="position:absolute;left:440px;top:121px" width="9" height="6" viewBox="0 0 9 6"><path d="M1 5 L4.5 1.5 L8 5" fill="none" stroke="#606060" stroke-width="1.5"/></svg><div style="position:absolute;left:438px;top:131px;width:12px;height:12px;background:#cdcdcd"></div><div style="position:absolute;left:451px;top:117px;width:1px;height:442px;background:#a9a9a9"></div><div style="position:absolute;left:452px;top:117px;width:2px;height:442px;background:#f0f0f0"></div><div style="position:absolute;left:454px;top:117px;width:2px;height:442px;background:#a0a0a0"></div><svg style="position:absolute;left:0;top:0" width="810" height="559" viewBox="0 0 810 559"><rect x="456" y="117" width="354" height="26" fill="#f0f0f0"/><rect x="456" y="129.5" width="354" height="1.2" fill="#3c3c3c"/><rect x="456" y="143" width="354" height="1.2" fill="#3c3c3c"/><rect x="455" y="117" width="1.5" height="27" fill="#3c3c3c"/><rect x="525.8" y="130" width="1.2" height="13" fill="#2a2a2a"/><rect x="595.8" y="130" width="1.2" height="13" fill="#2a2a2a"/><rect x="666.6" y="130" width="1.2" height="13" fill="#2a2a2a"/><rect x="735.9" y="130" width="1.2" height="13" fill="#2a2a2a"/><rect x="806.9" y="130" width="1.2" height="13" fill="#2a2a2a"/><rect x="457" y="131" width="353" height="1" fill="#fafafa"/><rect x="457.5" y="131" width="1" height="11" fill="#fcfcfc"/><rect x="523.9" y="131" width="1" height="11" fill="#fcfcfc"/><rect x="527.9" y="131" width="1" height="11" fill="#fcfcfc"/><rect x="593.9" y="131" width="1" height="11" fill="#fcfcfc"/><rect x="597.9" y="131" width="1" height="11" fill="#fcfcfc"/><rect x="664.7" y="131" width="1" height="11" fill="#fcfcfc"/><rect x="668.7" y="131" width="1" height="11" fill="#fcfcfc"/><rect x="734.0" y="131" width="1" height="11" fill="#fcfcfc"/><rect x="738.0" y="131" width="1" height="11" fill="#fcfcfc"/><rect x="805.0" y="131" width="1" height="11" fill="#fcfcfc"/><rect x="457" y="141" width="353" height="1" fill="#fcfcfc"/></svg><svg style="position:absolute;left:0;top:0" width="810" height="559" viewBox="0 0 810 559"><g stroke="#c6c6c6" stroke-width="1" stroke-dasharray="2,3" fill="none"><line x1="457.5" y1="144" x2="457.5" y2="559"/><line x1="526.5" y1="144" x2="526.5" y2="559"/><line x1="596.5" y1="144" x2="596.5" y2="559"/><line x1="667.5" y1="144" x2="667.5" y2="559"/><line x1="736.5" y1="144" x2="736.5" y2="559"/><line x1="807.5" y1="144" x2="807.5" y2="559"/><line x1="456" y1="233.5" x2="810" y2="233.5"/><line x1="456" y1="323.5" x2="810" y2="323.5"/><line x1="456" y1="413.5" x2="810" y2="413.5"/><line x1="456" y1="503.5" x2="810" y2="503.5"/></g><path d="M552.5 387.0 V390.5 H546.5 V401.5 H551.1" fill="none" stroke="#1e1e1e" stroke-width="1.2" stroke-dasharray="2.6,1.8"/><path d="M570.5 405.0 V408.5 H571.5 V419.5 H576.2" fill="none" stroke="#1e1e1e" stroke-width="1.2" stroke-dasharray="2.6,1.8"/><path d="M586.5 243.0 V246.5 H594.5 V437.5 H599.0" fill="none" stroke="#1e1e1e" stroke-width="1.2" stroke-dasharray="2.6,1.8"/><path d="M607.5 261.0 V264.5 H608.5 V455.5 H612.7" fill="none" stroke="#1e1e1e" stroke-width="1.2" stroke-dasharray="2.6,1.8"/><path d="M618.5 279.0 V282.5 H640.5 V473.5 H644.7" fill="none" stroke="#1e1e1e" stroke-width="1.2" stroke-dasharray="2.6,1.8"/><path d="M634.5 297.0 V300.5 H653.5 V491.5 H658.4" fill="none" stroke="#1e1e1e" stroke-width="1.2" stroke-dasharray="2.6,1.8"/><path d="M655.5 315.0 V318.5 H672.5 V509.5 H676.7" fill="none" stroke="#1e1e1e" stroke-width="1.2" stroke-dasharray="2.6,1.8"/><path d="M666.5 333.0 V336.5 H699.5 V527.5 H704.1" fill="none" stroke="#1e1e1e" stroke-width="1.2" stroke-dasharray="2.6,1.8"/><path d="M694.5 351.0 V354.5 H708.5 V545.5 H713.2" fill="none" stroke="#1e1e1e" stroke-width="1.2" stroke-dasharray="2.6,1.8"/><rect x="536.0" y="182.5" width="3.0" height="6.6" fill="#a01030" stroke="#4a0010" stroke-width="1"/><rect x="540.6" y="200.5" width="14.4" height="6.6" fill="#dc1010" stroke="#5a0000" stroke-width="1"/><rect x="556.6" y="218.5" width="16.7" height="6.6" fill="#dc1010" stroke="#5a0000" stroke-width="1"/><rect x="581.7" y="236.5" width="5.3" height="6.6" fill="#88e088" stroke="#2a5e2a" stroke-width="1"/><rect x="588.6" y="254.5" width="19.0" height="6.6" fill="#88e088" stroke="#2a5e2a" stroke-width="1"/><rect x="616.0" y="272.5" width="3.0" height="6.6" fill="#88e088" stroke="#2a5e2a" stroke-width="1"/><rect x="620.5" y="290.5" width="14.4" height="6.6" fill="#88e088" stroke="#2a5e2a" stroke-width="1"/><rect x="636.5" y="308.5" width="19.0" height="6.6" fill="#88e088" stroke="#2a5e2a" stroke-width="1"/><rect x="661.6" y="326.5" width="5.3" height="6.6" fill="#88e088" stroke="#2a5e2a" stroke-width="1"/><rect x="668.5" y="344.5" width="25.8" height="6.6" fill="#88e088" stroke="#2a5e2a" stroke-width="1"/><rect x="540.6" y="380.5" width="12.1" height="6.6" fill="#88e088" stroke="#2a5e2a" stroke-width="1"/><rect x="556.6" y="398.5" width="14.4" height="6.6" fill="#88e088" stroke="#2a5e2a" stroke-width="1"/><rect x="581.7" y="416.5" width="19.0" height="6.6" fill="#dc1010" stroke="#5a0000" stroke-width="1"/><rect x="604.5" y="434.5" width="12.1" height="6.6" fill="#dc1010" stroke="#5a0000" stroke-width="1"/><rect x="618.2" y="452.5" width="28.1" height="6.6" fill="#dc1010" stroke="#5a0000" stroke-width="1"/><rect x="650.2" y="470.5" width="12.1" height="6.6" fill="#dc1010" stroke="#5a0000" stroke-width="1"/><rect x="663.9" y="488.5" width="16.7" height="6.6" fill="#dc1010" stroke="#5a0000" stroke-width="1"/><rect x="682.2" y="506.5" width="21.2" height="6.6" fill="#dc1010" stroke="#5a0000" stroke-width="1"/><rect x="709.6" y="524.5" width="7.5" height="6.6" fill="#dc1010" stroke="#5a0000" stroke-width="1"/><rect x="718.7" y="542.5" width="30.4" height="6.6" fill="#dc1010" stroke="#5a0000" stroke-width="1"/><path d="M573.5 225.0 V228.5 H571.5 V239.5 H576.2" fill="none" stroke="#1e1e1e" stroke-width="1"/><path d="M586.5 243.0 V246.5 H578.5 V257.5 H583.1" fill="none" stroke="#1e1e1e" stroke-width="1"/><path d="M607.5 261.0 V264.5 H605.5 V275.5 H610.5" fill="none" stroke="#1e1e1e" stroke-width="1"/><path d="M618.5 279.0 V282.5 H610.5 V293.5 H615.0" fill="none" stroke="#1e1e1e" stroke-width="1"/><path d="M634.5 297.0 V300.5 H626.5 V311.5 H631.0" fill="none" stroke="#1e1e1e" stroke-width="1"/><path d="M655.5 315.0 V318.5 H651.5 V329.5 H656.1" fill="none" stroke="#1e1e1e" stroke-width="1"/><path d="M666.5 333.0 V336.5 H658.5 V347.5 H663.0" fill="none" stroke="#1e1e1e" stroke-width="1"/><path d="M539.5 189.0 V192.5 H530.5 V383.5 H535.1" fill="none" stroke="#1e1e1e" stroke-width="1"/><path d="M554.5 207.0 V210.5 H546.5 V401.5 H551.1" fill="none" stroke="#1e1e1e" stroke-width="1"/><path d="M539.5 189.0 V192.5 H530.5 V203.5 H535.1" fill="none" stroke="#902a30" stroke-width="1"/><path d="M554.5 207.0 V210.5 H546.5 V221.5 H551.1" fill="none" stroke="#902a30" stroke-width="1"/><path d="M600.5 423.0 V426.5 H594.5 V437.5 H599.0" fill="none" stroke="#902a30" stroke-width="1"/><path d="M616.5 441.0 V444.5 H608.5 V455.5 H612.7" fill="none" stroke="#902a30" stroke-width="1"/><path d="M646.5 459.0 V462.5 H640.5 V473.5 H644.7" fill="none" stroke="#902a30" stroke-width="1"/><path d="M662.5 477.0 V480.5 H653.5 V491.5 H658.4" fill="none" stroke="#902a30" stroke-width="1"/><path d="M680.5 495.0 V498.5 H672.5 V509.5 H676.7" fill="none" stroke="#902a30" stroke-width="1"/><path d="M703.5 513.0 V516.5 H699.5 V527.5 H704.1" fill="none" stroke="#902a30" stroke-width="1"/><path d="M717.5 531.0 V534.5 H708.5 V545.5 H713.2" fill="none" stroke="#902a30" stroke-width="1"/><path d="M573.5 225.0 V228.5 H571.5 V419.5 H576.2" fill="none" stroke="#902a30" stroke-width="1"/><path d="M548.6 401.5 L550.6 398.9 L555.8 401.5 L550.6 404.1 Z" fill="#111"/><path d="M573.7 419.5 L575.7 416.9 L580.9 419.5 L575.7 422.1 Z" fill="#111"/><path d="M596.5 437.5 L598.5 434.9 L603.7 437.5 L598.5 440.1 Z" fill="#111"/><path d="M610.2 455.5 L612.2 452.9 L617.4 455.5 L612.2 458.1 Z" fill="#111"/><path d="M642.2 473.5 L644.2 470.9 L649.4 473.5 L644.2 476.1 Z" fill="#111"/><path d="M655.9 491.5 L657.9 488.9 L663.1 491.5 L657.9 494.1 Z" fill="#111"/><path d="M674.2 509.5 L676.2 506.9 L681.4 509.5 L676.2 512.1 Z" fill="#111"/><path d="M701.6 527.5 L703.6 524.9 L708.8 527.5 L703.6 530.1 Z" fill="#111"/><path d="M710.7 545.5 L712.7 542.9 L717.9 545.5 L712.7 548.1 Z" fill="#111"/><path d="M573.7 239.5 L575.7 236.9 L580.9 239.5 L575.7 242.1 Z" fill="#111"/><path d="M580.6 257.5 L582.6 254.9 L587.8 257.5 L582.6 260.1 Z" fill="#111"/><path d="M608.0 275.5 L610.0 272.9 L615.2 275.5 L610.0 278.1 Z" fill="#111"/><path d="M612.5 293.5 L614.5 290.9 L619.7 293.5 L614.5 296.1 Z" fill="#111"/><path d="M628.5 311.5 L630.5 308.9 L635.7 311.5 L630.5 314.1 Z" fill="#111"/><path d="M653.6 329.5 L655.6 326.9 L660.8 329.5 L655.6 332.1 Z" fill="#111"/><path d="M660.5 347.5 L662.5 344.9 L667.7 347.5 L662.5 350.1 Z" fill="#111"/><path d="M532.6 383.5 L534.6 380.9 L539.8 383.5 L534.6 386.1 Z" fill="#111"/><path d="M548.6 401.5 L550.6 398.9 L555.8 401.5 L550.6 404.1 Z" fill="#111"/><path d="M532.6 203.5 L534.6 200.9 L539.8 203.5 L534.6 206.1 Z" fill="#c81414"/><path d="M548.6 221.5 L550.6 218.9 L555.8 221.5 L550.6 224.1 Z" fill="#c81414"/><path d="M596.5 437.5 L598.5 434.9 L603.7 437.5 L598.5 440.1 Z" fill="#c81414"/><path d="M610.2 455.5 L612.2 452.9 L617.4 455.5 L612.2 458.1 Z" fill="#c81414"/><path d="M642.2 473.5 L644.2 470.9 L649.4 473.5 L644.2 476.1 Z" fill="#c81414"/><path d="M655.9 491.5 L657.9 488.9 L663.1 491.5 L657.9 494.1 Z" fill="#c81414"/><path d="M674.2 509.5 L676.2 506.9 L681.4 509.5 L676.2 512.1 Z" fill="#c81414"/><path d="M701.6 527.5 L703.6 524.9 L708.8 527.5 L703.6 530.1 Z" fill="#c81414"/><path d="M710.7 545.5 L712.7 542.9 L717.9 545.5 L712.7 548.1 Z" fill="#c81414"/><path d="M573.7 419.5 L575.7 416.9 L580.9 419.5 L575.7 422.1 Z" fill="#c81414"/><rect x="534" y="144" width="2" height="415" fill="#28209c"/></svg><div class="t" style="left:520px;top:118.5px;font-size:8.6px;color:#222;font-weight:normal;letter-spacing:-0.9px;">2016</div><div class="t" style="left:471.0px;top:132px;width:40px;text-align:center;font-size:8.6px;color:#222;font-weight:normal;letter-spacing:-0.2px;">Jun</div><div class="t" style="left:541.4px;top:132px;width:40px;text-align:center;font-size:8.6px;color:#222;font-weight:normal;letter-spacing:-0.2px;">Jul</div><div class="t" style="left:611.8px;top:132px;width:40px;text-align:center;font-size:8.6px;color:#222;font-weight:normal;letter-spacing:-0.2px;">Aug</div><div class="t" style="left:681.9px;top:132px;width:40px;text-align:center;font-size:8.6px;color:#222;font-weight:normal;letter-spacing:-0.2px;">Sep</div><div class="t" style="left:752.0px;top:132px;width:40px;text-align:center;font-size:8.6px;color:#222;font-weight:normal;letter-spacing:-0.2px;">Oct</div><svg style="position:absolute;left:0;top:0" width="810" height="559" viewBox="0 0 810 559"><line x1="4.5" y1="40" x2="4.5" y2="57" stroke="#b0b0b0" stroke-width="1" stroke-dasharray="1,2"/><g transform="translate(10,42)"><rect x="2.5" y="0.5" width="7" height="4.5" fill="#f4f4f4" stroke="#a8a8a8"/><path d="M0.5 6 Q0.5 4.5 2 4.5 H10 Q11.5 4.5 11.5 6 V9.5 H0.5 Z" fill="#c4c4c4" stroke="#8c8c8c"/><rect x="2.5" y="8.5" width="7" height="3.5" fill="#8a8a8a" stroke="#7a7a7a"/><rect x="3.5" y="9.5" width="5" height="1.5" fill="#e8e8e8"/></g><g transform="translate(29,42)"><rect x="2.5" y="0.5" width="5" height="3.5" fill="#f4f4f4" stroke="#a8a8a8"/><path d="M0.5 5 Q0.5 3.5 2 3.5 H8 Q9.5 3.5 9.5 5 V8.5 H0.5 Z" fill="#c4c4c4" stroke="#8c8c8c"/><rect x="4.5" y="6.5" width="6" height="5" fill="#8a9aa0" stroke="#6a7a80"/><rect x="6" y="8" width="3" height="2" fill="#e8eef0"/></g><path d="M47 52.5 h4 l-2 2.2 z" fill="#111"/><line x1="58.5" y1="40" x2="58.5" y2="57" stroke="#b8b8b8" stroke-width="1" stroke-dasharray="1,2"/><g transform="translate(65,43)"><rect x="0.5" y="0.5" width="12" height="11" fill="#d6deea" stroke="#8a98b0"/><path d="M0.5 3.5 H12.5 M0.5 6.5 H12.5 M0.5 9 H12.5 M4.5 0.5 V11.5 M8.5 0.5 V11.5" stroke="#fff" stroke-width="1"/></g><rect x="80.5" y="39.5" width="18" height="17" fill="#cce8ff" stroke="#a8d4f6" stroke-width="1"/><g transform="translate(84,43.5)"><rect x="0.5" y="0.5" width="12" height="11" fill="#fff" stroke="#5a6a8a"/><rect x="1" y="1" width="11" height="2.5" fill="#5c7fc0"/><rect x="2" y="5" width="5" height="1.5" fill="#3a5aa0"/><rect x="6" y="7" width="5" height="1.5" fill="#d24a4a"/><rect x="3" y="9" width="4" height="1.2" fill="#3a5aa0"/></g><g transform="translate(102,42)"><rect x="0.5" y="0.5" width="5" height="3" rx="1" fill="#fff" stroke="#a4a4a4"/><rect x="0.5" y="4.5" width="5" height="3" rx="1" fill="#fff" stroke="#a4a4a4"/><rect x="0.5" y="8.5" width="5" height="3" rx="1" fill="#fff" stroke="#a4a4a4"/><circle cx="10" cy="6" r="2.5" fill="#fff" stroke="#a4a4a4"/><path d="M5.5 2 L7.5 6 L5.5 10 M7.5 6 H7.5" fill="none" stroke="#a4a4a4"/></g><rect x="118.5" y="39.5" width="18" height="17" fill="#cce8ff" stroke="#a8d4f6" stroke-width="1"/><g transform="translate(121.5,42)"><path d="M0.5 3 L3 0.5 L5.5 3 L3 5.5 Z" fill="#5cb85c" stroke="#3a8a3a" stroke-width="0.8"/><path d="M7 9.5 L9.5 7 L12 9.5 L9.5 12 Z" fill="#5cb85c" stroke="#3a8a3a" stroke-width="0.8"/><path d="M3.5 3.5 L7.5 7.5" stroke="#2a6a2a" stroke-width="1.2"/><path d="M5 6 L9.5 10.5 L5.5 10.5 Z" fill="#111"/></g><g transform="translate(141,42)"><path d="M2 1 V11 M5 3 V11 M8 5 V11 M1 11.5 H12" stroke="#dcdcdc" stroke-width="1.5"/></g><path d="M158.3 52.3 h4 l-2 2.2 z" fill="#111"/><line x1="168.8" y1="40" x2="168.8" y2="57" stroke="#b8b8b8" stroke-width="1" stroke-dasharray="1,2"/><rect x="172.5" y="39.5" width="18" height="17" fill="#cce8ff" stroke="#a8d4f6" stroke-width="1"/><g transform="translate(176,43.5)"><rect x="0.5" y="0.5" width="9" height="11" fill="#fff" stroke="#5e5e5e"/><circle cx="6" cy="6.5" r="2.8" fill="#f0f0f0" stroke="#5e5e5e"/><path d="M8 8.5 L11 11.5" stroke="#a08030" stroke-width="1.6"/></g><g transform="translate(194,43)"><rect x="0.5" y="0.5" width="11" height="11" fill="#fff" stroke="#707070"/><rect x="1" y="1" width="10" height="2" fill="#b0b0b0"/><rect x="0.5" y="7" width="12" height="5" fill="#5cb85c" stroke="#3a7a3a"/></g><g transform="translate(212,43)"><rect x="0.5" y="0.5" width="2.5" height="10" fill="#ddd" stroke="#707070"/><rect x="4" y="3.5" width="2.5" height="7" fill="#ddd" stroke="#707070"/><rect x="0.5" y="7.5" width="12" height="4" fill="#5cb85c" stroke="#3a7a3a"/></g><g transform="translate(231,43)"><rect x="0.5" y="0.5" width="5" height="11" fill="#eee" stroke="#707070"/><path d="M0.5 3.5 H5.5 M3 0.5 V11.5" stroke="#707070"/><circle cx="9" cy="4" r="2.6" fill="#d8b896" stroke="#6a5a4a" stroke-width="0.8"/><path d="M5 12 Q9 6 13 12 Z" fill="#3a8aaa"/></g><g transform="translate(250,43)"><rect x="0" y="0" width="5" height="6" fill="#c84a4a"/><rect x="0" y="6" width="5" height="6" fill="#4a6ac8"/><circle cx="9" cy="4" r="2.6" fill="#d8b896" stroke="#6a5a4a" stroke-width="0.8"/><path d="M5 12 Q9 6 13 12 Z" fill="#3a8aaa"/></g><g transform="translate(270,42)"><path d="M1 0 L3.5 2.5" stroke="#444" stroke-width="1"/><rect x="1.5" y="3.5" width="8" height="6" fill="#eee" stroke="#9a9a9a"/><path d="M6 11.5 H11 L9.5 10" fill="none" stroke="#d05050" stroke-width="1"/></g><g transform="translate(288,42)"><path d="M2 0.5 H11 L6.5 4 Z" fill="#fff" stroke="#606060"/><rect x="0.5" y="5" width="12" height="7" fill="#6a6a6a"/><rect x="2" y="7" width="3" height="2" fill="#fff"/><rect x="7" y="7" width="3" height="2" fill="#fff"/></g><path d="M306.4 52.3 h4 l-2 2.2 z" fill="#111"/><line x1="318" y1="40" x2="318" y2="57" stroke="#b8b8b8" stroke-width="1" stroke-dasharray="1,2"/><g transform="translate(323,43)"><rect x="0" y="0" width="13" height="3" fill="#3c5a9a"/><rect x="0" y="4" width="10" height="3" fill="#5a9a5a"/><rect x="0.5" y="8.5" width="6" height="2.5" fill="#fff" stroke="#6a6a6a"/></g><g transform="translate(344,42.5)"><rect x="0.5" y="0.5" width="10" height="12" fill="#dbe8f8" stroke="#8aa0c0"/><path d="M4 0.5 V12.5 M7.5 0.5 V12.5" stroke="#8aa0c0"/></g><path d="M358 47.5 h4 l-2 2.2 z" fill="#111"/><g transform="translate(369,43)"><rect x="0.5" y="0.5" width="12" height="10" fill="#f4ecd0" stroke="#8a98b0"/><rect x="1" y="1" width="11" height="2.5" fill="#b8c8e0"/><path d="M3 6.5 H10 M3 8 H10" stroke="#c8a860" stroke-width="1"/></g><g transform="translate(388,43)"><path d="M0.5 0.5 H11.5 L7 5.5 V11 L5 11 V5.5 Z" fill="#7a9ab8" stroke="#5a7a98"/></g><path d="M403 47.5 h4 l-2 2.2 z" fill="#111"/><g transform="translate(415,42)"><rect x="0.5" y="0.5" width="11" height="11" fill="#eef2f8" stroke="#7a8aa8"/><rect x="4.5" y="4.5" width="7" height="7" fill="#fff" stroke="#7a8aa8"/><rect x="1" y="1" width="10" height="2" fill="#b8c8e0"/></g><path d="M429.5 47.5 h4 l-2 2.2 z" fill="#111"/><g transform="translate(443,43)"><path d="M3 0 L2 11 M6.5 0 L5.5 11 M0 3.5 H8 M0 7.5 H8" stroke="#8aa0b8" stroke-width="1"/></g><path d="M458.7 52.3 h4 l-2 2.2 z" fill="#111"/><line x1="470.5" y1="40" x2="470.5" y2="57" stroke="#b8b8b8" stroke-width="1" stroke-dasharray="1,2"/><g transform="translate(477,42.5)"><rect x="0.5" y="0.5" width="12" height="11" fill="#eef2f8" stroke="#7a8aa8"/><rect x="1" y="1" width="11" height="2" fill="#7a8aa8"/><path d="M1 6.5 H12 M1 9.5 H12" stroke="#d05a6a"/><path d="M6.5 3 V11.5" stroke="#9aaac0"/></g><g transform="translate(495,43)"><circle cx="5.5" cy="5.5" r="5" fill="#f4f4f4" stroke="#7a7a7a"/><path d="M5.5 2.5 V5.5 L7.5 7" stroke="#555" fill="none"/><path d="M8 8 L12.5 10 L8 12 Z" fill="#5cb85c"/></g><g transform="translate(514,42)"><rect x="0.5" y="0.5" width="4" height="5" fill="#7ab87a" stroke="#4a8a4a"/><path d="M8.5 0 V4 M10.5 0 V4 M2.5 6 V8 H10 M6 8 V11" stroke="#333" fill="none"/><path d="M3 12 L6 9 L9 12 Z" fill="#a08a5a"/></g><g transform="translate(533,42)"><rect x="0.5" y="1.5" width="9" height="7" fill="#6a9ac8" stroke="#4a7aa8"/><path d="M5 6 L12 10 L8 13 L4 9 Z" fill="#e4e47a"/></g><g transform="translate(553.6,42)"><path d="M5 0 V13" stroke="#8a5ab8" stroke-width="1.4"/><path d="M8 2 L2 6 L8 10" fill="none" stroke="#9a6ac8" stroke-width="1.6"/></g><g transform="translate(570.5,42)"><rect x="0" y="0" width="6" height="6" fill="#3a8ac8"/><rect x="6" y="0" width="7" height="6" fill="#5cb87a"/><rect x="1.5" y="6.5" width="10" height="6" fill="#fff" stroke="#333"/><rect x="5" y="7" width="3" height="3" fill="#333"/></g><g transform="translate(589,43)"><rect x="0.5" y="0.5" width="11" height="9" fill="#f0f0f0" stroke="#8a8a8a"/><rect x="1" y="1" width="3" height="8" fill="#8a9ab0"/><path d="M5 3.5 H11 M5 6 H11" stroke="#9aa"/></g><path d="M607 52.3 h4 l-2 2.2 z" fill="#111"/><line x1="618.7" y1="40" x2="618.7" y2="57" stroke="#b8b8b8" stroke-width="1" stroke-dasharray="1,2"/><g transform="translate(625,42)"><circle cx="5" cy="5" r="4.3" fill="#eef4fa" stroke="#5a6a7a" stroke-width="1.2"/><path d="M3 5 H7 M5 3 V7" stroke="#333" stroke-width="1.4"/><path d="M8 8 L12 12" stroke="#d8c070" stroke-width="2.2" stroke-linecap="round"/></g><g transform="translate(644,42)"><circle cx="5" cy="5" r="4.3" fill="#eef4fa" stroke="#5a6a7a" stroke-width="1.2"/><path d="M3 5 H7" stroke="#333" stroke-width="1.4"/><path d="M8 8 L12 12" stroke="#d8c070" stroke-width="2.2" stroke-linecap="round"/></g><g transform="translate(662,42)"><circle cx="5" cy="5" r="4.3" fill="#f8f8f8" stroke="#dadada" stroke-width="1.2"/><path d="M8 8 L12 12" stroke="#e4e4e4" stroke-width="2.2" stroke-linecap="round"/></g><g transform="translate(682,43)"><rect x="0.5" y="0.5" width="12" height="5" fill="#cfe0f4" stroke="#6a8ab0"/><rect x="0.5" y="6.5" width="12" height="5" fill="#cfe0f4" stroke="#6a8ab0"/></g><g transform="translate(700,43)"><path d="M6 0.5 L11.5 6 L6 11.5 L0.5 6 Z" fill="#f2f2f2" stroke="#dcdcdc"/><circle cx="6" cy="6" r="1.5" fill="#d0d0d0"/></g><g transform="translate(719,42.5)"><rect x="0.5" y="0.5" width="5" height="12" fill="#cfe0f4" stroke="#6a8ab0"/><rect x="6.5" y="0.5" width="5" height="12" fill="#cfe0f4" stroke="#6a8ab0"/></g><g transform="translate(737.5,43)"><path d="M0.5 0.5 H12 V7 H5 L2 10 V7 H0.5 Z" fill="#f0e890" stroke="#8a8040"/><path d="M3 3 H9 M3 5 H8" stroke="#8a8040"/></g><g transform="translate(756,42)"><circle cx="6" cy="6" r="5.5" fill="#eef0a0" stroke="#7a7a3a" stroke-width="1"/><path d="M4.2 4.5 Q4.2 2.8 6 2.8 Q7.8 2.8 7.8 4.5 Q7.8 5.8 6 6.3 V7.5" fill="none" stroke="#555" stroke-width="1.2"/><circle cx="6" cy="9" r="0.8" fill="#555"/></g><g transform="translate(775,42)"><circle cx="6" cy="6" r="5.5" fill="#eef0a0" stroke="#7a7a3a" stroke-width="1"/><path d="M4.2 4.5 Q4.2 2.8 6 2.8 Q7.8 2.8 7.8 4.5 Q7.8 5.8 6 6.3 V7.5" fill="none" stroke="#555" stroke-width="1.2"/><circle cx="6" cy="9" r="0.8" fill="#555"/><circle cx="9.5" cy="9.5" r="3" fill="#4aa0b8"/></g><path d="M793 52.3 h4 l-2 2.2 z" fill="#111"/><line x1="2" y1="63.5" x2="20" y2="63.5" stroke="#b8b8b8" stroke-width="1" stroke-dasharray="1,2"/><g transform="translate(5,70.5)"><path d="M0.5 1 H4.5 L5.5 2.5 H11.5 V10.5 H0.5 Z" fill="#c4d2e2" stroke="#8a9ab0" stroke-width="0.8"/><path d="M9.5 6 V11.5 M7 8.8 H12" stroke="#6a6a6a" stroke-width="1.4"/></g><g transform="translate(5,88)"><path d="M0.5 1 H4.5 L5.5 2.5 H11.5 V10.5 H0.5 Z" fill="#c4d2e2" stroke="#8a9ab0" stroke-width="0.8"/><path d="M2 5 Q6 1 11 4" stroke="#e09a3a" stroke-width="1.6" fill="none"/></g><g transform="translate(5,106.5)"><path d="M0.5 1 H4.5 L5.5 2.5 H11.5 V10.5 H0.5 Z" fill="#c4d2e2" stroke="#8a9ab0" stroke-width="0.8"/><rect x="7" y="0" width="5" height="6" fill="#d8b040" stroke="#8a7030" stroke-width="0.8"/></g><ellipse cx="5.5" cy="126" rx="1.3" ry="1.6" fill="#111"/><line x1="2" y1="136.5" x2="20" y2="136.5" stroke="#b8b8b8" stroke-width="1" stroke-dasharray="1,2"/><g transform="translate(4.5,143.5)"><path d="M0.5 1 H4.5 L5.5 2.5 H11.5 V10.5 H0.5 Z" fill="#b8c6d8" stroke="#9aa8bc" stroke-width="0.8"/></g><g transform="translate(4.5,161.5)"><circle cx="6" cy="4" r="3" fill="#caa080" stroke="#6a5040" stroke-width="0.8"/><path d="M0 11.5 Q6 5 12 11.5 Z" fill="#2e7a9a"/></g><g transform="translate(5,180)"><rect x="1.5" y="0.5" width="9.5" height="11" fill="#fff" stroke="#6a7a90"/><circle cx="6" cy="4.5" r="2" fill="#a0b4c8"/><path d="M0 3 H2.5 M0 6 H2.5 M0 9 H2.5" stroke="#555"/></g><g transform="translate(5.5,200)"><rect x="0.5" y="0.5" width="11" height="11" fill="#eee" stroke="#6a6a6a"/><path d="M2 3 L10 8" stroke="#fff" stroke-width="1.5"/><rect x="1" y="8" width="10" height="3" fill="#7aa89a"/></g><ellipse cx="5.5" cy="219" rx="1.3" ry="1.6" fill="#111"/><line x1="2" y1="228.5" x2="20" y2="228.5" stroke="#b8b8b8" stroke-width="1" stroke-dasharray="1,2"/><g transform="translate(5,238)"><rect x="0.5" y="0.5" width="9.5" height="6" rx="2" fill="#6ac06a" stroke="#4a9a4a"/><rect x="2.5" y="2.5" width="5.5" height="2" fill="#a8e0a8"/></g><g transform="translate(5.5,254.5)"><rect x="0" y="0" width="7" height="6.5" fill="#4a5ad8"/><rect x="4" y="4" width="7" height="6.5" fill="#5a6ae0" stroke="#3a4ab8" stroke-width="0.6"/></g><g transform="translate(4.5,272)"><rect x="0" y="0" width="5" height="5" fill="#6ab04a"/><circle cx="7" cy="4" r="2.6" fill="#d4c0a0" stroke="#7a6a50" stroke-width="0.6"/><path d="M0.5 12 Q6.5 6.5 12.5 12 Z" fill="#2e7a9a"/></g><g transform="translate(7,292.5)"><path d="M0.5 0.5 H6 L8.5 3 V11 H0.5 Z" fill="#f4f4f4" stroke="#8a8a9a"/><rect x="2" y="5" width="5" height="4" fill="none" stroke="#b0b0c0"/></g><g transform="translate(6,310.5)"><rect x="0.5" y="0.5" width="10" height="11" fill="#e4e4ea" stroke="#7a7a8a"/><path d="M2 3 H9 M2 5.5 H6 M7 7 V10" stroke="#9a6a7a"/></g><g transform="translate(6,328)"><ellipse cx="5" cy="3" rx="4" ry="2.5" fill="#d8d8d8" stroke="#9a9a9a" stroke-width="0.6"/><path d="M1 7 Q5 4 9 7 V9 Q5 13 1 9 Z" fill="#d04a5a"/></g><ellipse cx="5.5" cy="348.5" rx="1.3" ry="1.6" fill="#111"/><line x1="2" y1="357.5" x2="20" y2="357.5" stroke="#b8b8b8" stroke-width="1" stroke-dasharray="1,2"/><g transform="translate(4.5,364)"><path d="M0.5 6 V11.5 H11.5 V6" fill="#f0f0f4" stroke="#8a8a9a"/><path d="M6 0 V5" stroke="#3a7ac0" stroke-width="2"/><path d="M3 3 H9 L6 7 Z" fill="#3a7ac0"/></g><g transform="translate(4.5,383)"><path d="M0.5 6 V11.5 H11.5 V6" fill="#f0f0f4" stroke="#8a8a9a"/><path d="M3 4 L6 0.5 L9 4 Z" fill="#3a7ac0"/><path d="M6 3 V8" stroke="#3a7ac0" stroke-width="2"/></g><g transform="translate(4.5,403.5)"><path d="M0.5 6 V11.5 H11.5 V6" fill="#f0f0f4" stroke="#8a8a9a"/><path d="M3 4 L6 0.5 L9 4 Z" fill="#5aa84a"/><path d="M6 3 V8" stroke="#5aa84a" stroke-width="2"/></g><g transform="translate(4.5,421)"><path d="M0.5 6 V11.5 H11.5 V6" fill="#f0f0f4" stroke="#8a8a9a"/><path d="M3 4 L6 0.5 L9 4 Z" fill="#d04a5a"/><path d="M6 3 V8" stroke="#d04a5a" stroke-width="2"/></g><ellipse cx="5.5" cy="440" rx="1.3" ry="1.6" fill="#111"/></svg>
</body></html>
